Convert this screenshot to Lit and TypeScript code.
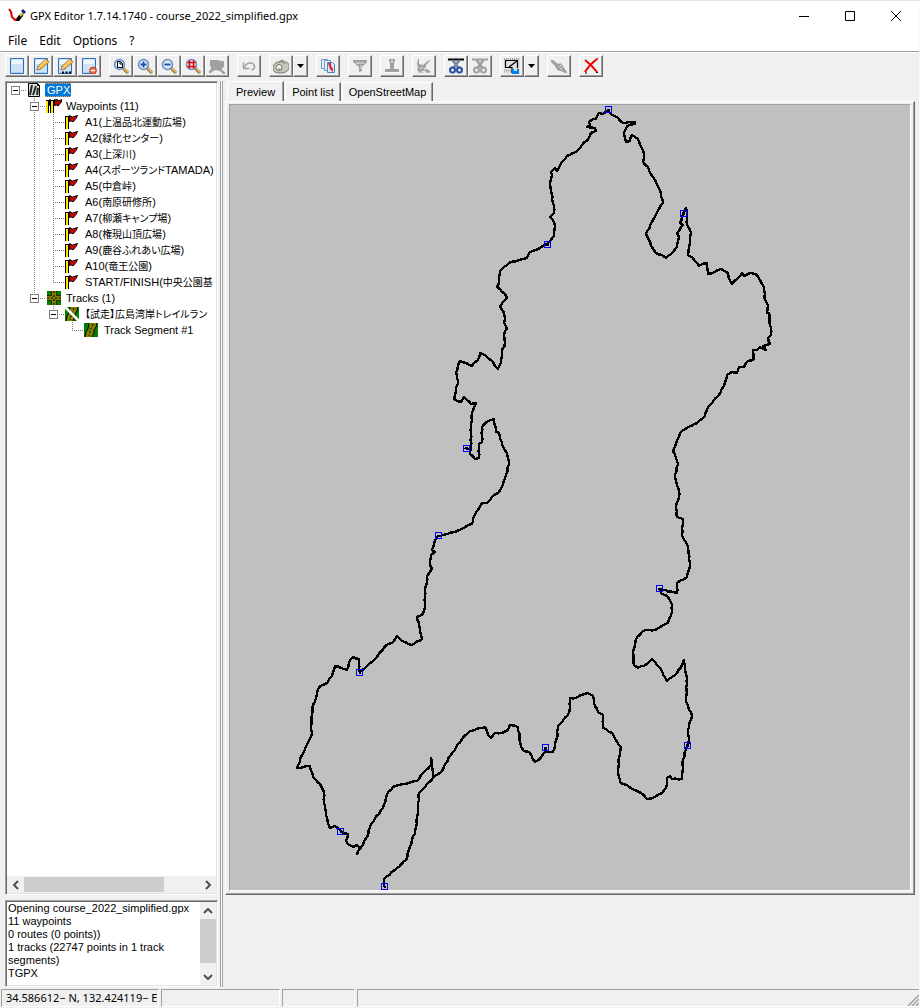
import { LitElement, html, svg, css } from "lit";
import { customElement, property, state } from "lit/decorators.js";
import { classMap } from "lit/directives/class-map.js";

const lens = (inner: unknown) => svg`
  <path d="M10 10l5 5" stroke="#8a6a3c" stroke-width="3"/>
  <path d="M10.500 10l4.500 4.500" stroke="#f0b95c" stroke-width="1.500"/>
  <circle cx="6.500" cy="6.500" r="5" fill="#d8e8fa" stroke="#6f8fc4" stroke-width="1.500"/>
  ${inner}`;

const sheet = svg`
  <path d="M1.500 .5h13v15h-13z" fill="#cfe3f8" stroke="#2f6fb8"/>
  <path d="M3 2h10v4H3z" fill="#eef6fe"/>
  <path d="M3 14.500h10" stroke="#a9cdf0"/>`;

const pencil = svg`
  <path d="M4 12l1-4 8-7 3 3-8 7z" fill="#f5b94a" stroke="#a8722a" stroke-width=".8"/>
  <path d="M4 12l1-4 2.500 2.800z" fill="#f7dfb4" stroke="#806040" stroke-width=".6"/>
  <path d="M6 9.500l7.500-7" stroke="#fde3a0"/>`;

const flag = (c: string, x = 0) => svg`
  <g transform="translate(${x} 0)">
    <path d="M0 2h4v13H0z" fill="#000"/>
    <path d="M1 3h2v12H1z" fill="#ffe800"/>
    <path d="M4.500 1.500l3 1.500 5-1.500-1.500 3-3 3.500-1.500-1-2 .5z" fill="${c}" stroke="#000"/>
  </g>`;

const road = svg`
  <path d="M0 0h14v14H0z" fill="#008000"/>
  <path d="M5 0h8l-1 4-2 3v3l-2 4H1l1-5 2-3z" fill="#808000"/>
  <path d="M5 0L4 6l-2 3-1 5M13 0l-1 4-2 3v3l-2 4" stroke="#000" fill="none"/>
  <path d="M9 1L8 4 6 7v3l-1 3" stroke="#000" fill="none" stroke-dasharray="2 2"/>`;

const scissors = (dark: string, blade: string, ring: string) => svg`
  <path d="M0 1.500h16" stroke="${dark}" stroke-width="2"/>
  <path d="M4.500 2l6 8M11.500 2l-6 8" stroke="${blade}" stroke-width="2.600"/>
  <circle cx="4.500" cy="12" r="2.500" fill="none" stroke="${ring}" stroke-width="2"/>
  <circle cx="11.500" cy="12" r="2.500" fill="none" stroke="${ring}" stroke-width="2"/>`;

const icons: Record<string, unknown> = {
  sheet,
  edit: svg`${sheet}${pencil}`,
  editDots: svg`${sheet}${pencil}<path d="M5 14.500h2m1.500 0h2m1.500 0h2" stroke="#000" stroke-width="2"/>`,
  remove: svg`${sheet}<circle cx="12" cy="12.500" r="3.500" fill="#e8663a" stroke="#b8431f" stroke-width=".8"/><path d="M10 12.500h4" stroke="#fff" stroke-width="1.500"/>`,
  zoomPage: lens(svg`<path d="M4.500 3.500h3l2 2v4h-5zM7 4v2h2" fill="#fff" stroke="#000"/>`),
  zoomIn: lens(svg`<path d="M3.500 6.500h6M6.500 3.500v6" stroke="#1c4fa0" stroke-width="1.800"/>`),
  zoomOut: lens(svg`<path d="M3.500 6.500h6" stroke="#1c4fa0" stroke-width="1.800"/>`),
  zoomSel: lens(svg`<path d="M4.500 2.500v8M8.500 2.500v8M2.500 4.500h8M2.500 8.500h8" stroke="#f00000" stroke-width="1.500"/>`),
  pan: svg`<path d="M1 2h9l1 1h4v6l-2 1v2l3 2v2h-2l-3-3-4-1-3 1-2 2H0v-2l2-2V9L1 8z" fill="#a0a0a0"/>`,
  undo: svg`<path d="M3.500 9.500C5 4 13.500 3.500 13.500 8.500c0 2-1 3-3 3.500" fill="none" stroke="#a0a0a0" stroke-width="1.500"/><path d="M2.500 4.500v6h6" fill="none" stroke="#a0a0a0" stroke-width="1.500"/>`,
  mouse: svg`<path d="M0 10c0-4 3-6 6-6l3-2 3 2c3 0 5 3 4 6-1 4-5 5-9 5-4 0-7-1-7-5z" fill="#c6c6b8" stroke="#77776c"/><circle cx="6" cy="9.500" r="3" fill="#eee" stroke="#77776c"/><path d="M6 4c2-1 4 0 6 2M9 10c-1 3-4 2-3 0" stroke="#77776c" fill="none"/>`,
  copy: svg`<path d="M1.500 1.500h6v9h-6z" fill="#e4f2fd" stroke="#6d9ac4"/><path d="M4.500 2.500h6v10h-6z" fill="#e4f2fd" stroke="#6d9ac4"/><path d="M7.500 4.500h5l2 2v8h-7z" fill="#d4e8fa" stroke="#4e86bc"/><path d="M8 5h3v3l2 3v3l-3-3z" fill="#e02020"/>`,
  filter: svg`<path d="M1 2h14v2l-5 5v4l-3 1V9L1 4z" fill="#a0a0a0"/><path d="M4 5h8M9 7v4" stroke="#e8e8e8"/>`,
  simplify: svg`<path d="M5 1h6v2l-1 2v6h5v3H1v-3h5V5L5 3z" fill="#a0a0a0"/><path d="M8 2v3M2 14.500h13" stroke="#f8f8f8"/>`,
  smooth: svg`<path d="M2 1h1v5l4 1 5-4 3-1-5 5v2l-3 3 4-1 4 3-3 1-3-1-5 1-3-3 1-3-1-3z" fill="#a0a0a0"/><path d="M4 11l3-2M5 14l5-1" stroke="#e8e8e8"/>`,
  cut: scissors("#000", "#7b8899", "#2450a8"),
  cutOff: scissors("#a0a0a0", "#a0a0a0", "#a0a0a0"),
  rect: svg`<path d="M0 0h16v16H0z" fill="#e0e0e0"/><path d="M0 1h16M0 12.500h8" stroke="#a8a8a8" stroke-width="2" stroke-dasharray="1 1"/><path d="M1.500 10V2.500h12V10M1 9.500h7V15M5 9l8-6" fill="none" stroke="#000" stroke-width="1.200"/><path d="M8 11h7v5H8z" fill="#0080f0"/><path d="M10 11h3v2h-3z" fill="#cde"/>`,
  join: svg`<path d="M0 2h2l5 4c3-1 5 1 6 4l3 4v1h-2l-4-2c-3 0-5-2-6-5L0 4z" fill="#a0a0a0"/><path d="M6 8l4-2M9 12l4-2" stroke="#a0a0a0" stroke-width="2"/><path d="M7 8l4 4M9 7l3 3" stroke="#e8e8e8" stroke-dasharray="2 1"/>`,
  del: svg`<path d="M2 2c4 3 8 7 12 12M14 1C9 5 5 9 2 14" stroke="#f00000" stroke-width="2" fill="none"/><path d="M13 14.500h2M2 15h2M14 1l1-1" stroke="#400"/>`,
  gpx: svg`<path d="M1.500 1.500h9l2 2v11h-11z" fill="#e0e0e0" stroke="#000"/><path d="M10.500 1.500v2h2" stroke="#000"/><path d="M3 13L5 3M6 13l3-9M10 13l1-7" stroke="#1d2b1d" stroke-width="2"/>`,
  waypoints: svg`${flag("#1818c0", -1)}${flag("#c00000", 4)}`,
  waypoint: flag("#d00000"),
  tracks: svg`<path d="M1 1h14v14H1z" fill="#008000"/><path d="M5.500 1h5v14h-5zM1 5.500h14v5H1z" fill="#808000"/><path d="M5.500 1v4.500H1M10.500 1v4.500H15M5.500 15v-4.500H1M10.500 15v-4.500H15" fill="none" stroke="#302800"/><path d="M8 1v14M1 8h14" stroke="#000" stroke-dasharray="2 2"/>`,
  track: svg`<g transform="translate(0 1)">${road}<path d="M0 0l14 14" stroke="#fff" stroke-width="2.500"/></g>`,
  segment: svg`<g transform="translate(0 1)">${road}</g>`,
};

const icon = (name: string) =>
  html`<svg class="icon" width="16" height="16" viewBox="0 0 16 16" fill="none" aria-hidden="true">${icons[name]}</svg>`;

interface Tool { icon: string; label: string; off?: boolean; menu?: boolean }

const toolGroups: Tool[][] = [
  [
    { icon: "sheet", label: "New" },
    { icon: "edit", label: "Open" },
    { icon: "editDots", label: "Save as" },
    { icon: "remove", label: "Close file" },
  ],
  [
    { icon: "zoomPage", label: "Zoom to fit" },
    { icon: "zoomIn", label: "Zoom in" },
    { icon: "zoomOut", label: "Zoom out" },
    { icon: "zoomSel", label: "Zoom selection" },
    { icon: "pan", label: "Pan", off: true },
  ],
  [{ icon: "undo", label: "Undo", off: true }],
  [{ icon: "mouse", label: "Mouse mode", menu: true }],
  [{ icon: "copy", label: "Copy" }],
  [{ icon: "filter", label: "Filter", off: true }],
  [{ icon: "simplify", label: "Simplify", off: true }],
  [{ icon: "smooth", label: "Smooth", off: true }],
  [
    { icon: "cut", label: "Split track" },
    { icon: "cutOff", label: "Split segment", off: true },
  ],
  [{ icon: "rect", label: "Select area", menu: true }],
  [{ icon: "join", label: "Join", off: true }],
  [{ icon: "del", label: "Delete" }],
];

/* Guides describe one 19px column each: v = line through, t = branch, l = last branch,
   s = stub only, blank = empty. A trailing "-" puts an expander on the branch. */
interface Row { guides: string[]; icon: string; text: string; selected?: boolean }

const places = [
  "A1(上温品北運動広場)",
  "A2(緑化センター)",
  "A3(上深川)",
  "A4(スポーツランドTAMADA)",
  "A5(中倉峠)",
  "A6(南原研修所)",
  "A7(柳瀬キャンプ場)",
  "A8(権現山頂広場)",
  "A9(鹿谷ふれあい広場)",
  "A10(竜王公園)",
  "START/FINISH(中央公園基",
];

const rows: Row[] = [
  { guides: ["s-"], icon: "gpx", text: "GPX", selected: true },
  { guides: ["", "t-"], icon: "waypoints", text: "Waypoints (11)" },
  ...places.map((text, i) => ({
    guides: ["", "v", i === places.length - 1 ? "l" : "t"],
    icon: "waypoint",
    text,
  })),
  { guides: ["", "l-"], icon: "tracks", text: "Tracks (1)" },
  { guides: ["", "", "l-"], icon: "track", text: "【試走】広島湾岸トレイルラン" },
  { guides: ["", "", "", "l"], icon: "segment", text: "Track Segment #1" },
];

const course =
  "466,448 471,450 471,427 472,413 474,408 476,403 471,404 464,397 461,402 454,399 456,391 456,387 458,384 457,375 456,373 458,365 460,361 472,366 474,363 478,360 480,353 486,356 493,362 495,366 498,369 501,363 502,352 505,343 504,335 507,328 504,323 505,319 504,313 500,307 503,302 507,298 505,294 497,287 499,283 500,271 504,267 509,263 519,260 527,258 530,252 540,248 547,244 " +
  "554,236 555,225 553,220 550,217 554,213 554,206 553,203 551,190 550,185 552,175 551,172 555,168 557,171 560,165 567,156 576,152 582,145 589,138 591,133 596,131 595,128 587,127 590,125 589,122 593,119 596,119 599,113 603,114 608,110 " +
  "612,115 618,118 623,123 635,122 635,124 627,126 624,132 626,142 630,141 632,135 638,139 640,144 643,150 644,154 643,162 648,167 650,173 653,177 657,185 660,190 663,203 657,212 652,222 646,234 649,240 651,246 656,253 662,255 666,258 673,252 677,247 679,237 677,233 683,225 680,223 682,217 683,214 686,208 687,215 687,225 691,233 689,247 688,255 693,258 699,266 702,264 707,263 708,274 713,273 721,269 728,273 730,281 732,284 737,279 742,273 744,276 750,273 757,275 761,282 764,287 765,300 768,305 767,313 " +
  "769,313 770,325 771,328 771,335 768,338 770,344 763,346 766,350 760,347 757,350 753,350 754,359 748,361 744,367 739,367 737,373 732,372 727,375 724,386 718,396 708,407 705,416 697,423 688,427 680,433 676,444 673,451 676,458 678,464 675,475 677,485 679,490 679,498 676,505 677,517 683,519 682,535 688,547 690,565 687,577 677,583 677,593 659,589 " +
  "662,594 667,596 672,604 672,612 669,619 668,623 662,626 655,630 645,630 637,637 635,645 633,652 634,665 638,668 647,664 652,659 660,668 667,681 677,673 682,665 684,660 685,670 687,678 686,702 692,715 688,730 689,740 687,746 683,760 682,779 672,779 670,776 667,778 666,788 662,793 655,797 647,799 641,793 635,790 620,782 618,773 619,758 621,747 615,739 612,733 603,728 603,715 598,712 594,703 593,696 588,693 581,695 576,698 570,698 570,707 568,715 558,726 557,738 553,752 547,752 545,748 545,752 540,759 535,762 529,752 524,751 521,747 518,727 510,725 508,730 502,733 495,733 491,738 488,735 485,727 470,731 462,739 450,756 441,772 433,778 419,793 418,810 416,827 415,834 413,836 409,850 406,860 397,868 384,879 384,886";

const returnLeg =
  "433,778 432,767 431,758 431,765 423,773 417,781 403,784 393,787 387,794 383,808 371,824 367,837 357,854 360,848 357,845 353,847 348,844 346,841 348,834 343,833 339,829 335,826 330,828 328,823 326,812 324,803 324,792 320,784 313,777 310,766 297,768 302,755 308,743 312,733 311,726 313,705 316,698 319,687 328,682 333,673 335,666 341,668 347,670 349,662 353,657 359,659 359,670 360,672 367,666 377,657 385,646 392,643 397,636 402,641 411,645 422,639 420,629 417,617 422,615 425,607 425,590 427,583 427,576 432,569 430,565 431,555 435,552 432,550 434,543 438,536 447,534 455,532 465,527 472,524 473,518 478,510 482,503 487,503 492,497 498,493 503,485 506,475 509,464 507,453 502,445 500,436 498,432 496,432 494,419 488,421 482,427 482,442 479,444 479,458 475,459 470,454 470,448";

/* Recorded trails wobble between their turning points: each long leg is split
   into short steps that sit a little to either side of it. */
const wobble = (points: string) => {
  const pts = points.split(" ").map((p) => p.split(",").map(Number));
  const sway = [0, 1, -1, 1, 0, -1];
  let n = 0;
  const out: string[] = [];
  pts.forEach(([x, y], i) => {
    if (i) {
      const [px, py] = pts[i - 1];
      const len = Math.hypot(x - px, y - py);
      const steps = Math.floor(len / 3);
      for (let s = 1; s < steps; s++) {
        const o = sway[n++ % sway.length] * 0.4;
        const t = s / steps;
        out.push(`${(px + (x - px) * t - ((y - py) / len) * o).toFixed(1)},${(py + (y - py) * t + ((x - px) / len) * o).toFixed(1)}`);
      }
    }
    out.push(`${x},${y}`);
  });
  return out.join(" ");
};

const markers = [
  [608, 109], [547, 244], [683, 213], [659, 588], [687, 745], [545, 747],
  [340, 831], [359, 672], [438, 535], [466, 448], [384, 886],
];

const chevron = (d: string) =>
  html`<svg width="10" height="10" viewBox="0 0 10 10" fill="none" aria-hidden="true"><path d="${d}" stroke="#505050" stroke-width="2"/></svg>`;

@customElement("gpx-toolbar")
class GpxToolbar extends LitElement {
  static styles = css`
    :host { display: flex; flex-wrap: wrap; gap: 8px; padding: 2px 5px 3px; }
    .group { display: flex; }
    button {
      box-sizing: border-box; width: 24px; height: 22px; padding: 0 1px 1px 0;
      display: grid; place-items: center; background: #f0f0f0;
      border: 1px solid; border-color: #fff #696969 #696969 #fff;
      box-shadow: inset -1px -1px #a0a0a0;
    }
    .arrow { width: 15px; }
    .icon { display: block; }
  `;
  render() {
    return toolGroups.map((g) => html`<div class="group">${g.map((t) => html`
      <button type="button" aria-label=${t.label} ?disabled=${t.off}>${icon(t.icon)}</button>
      ${t.menu ? html`<button type="button" class="arrow" aria-label="${t.label} options">
        <svg width="7" height="4" viewBox="0 0 7 4" aria-hidden="true"><path d="M0 0h7L3.500 4z" fill="#000"/></svg>
      </button>` : null}`)}</div>`);
  }
}

@customElement("gpx-tree")
class GpxTree extends LitElement {
  static styles = css`
    :host { display: block; overflow: hidden; background: #fff; }
    ul { list-style: none; margin: -1px 0 0; padding: 0; }
    li { display: flex; align-items: center; height: 16px; white-space: nowrap; }
    .guide { flex: none; width: 19px; height: 16px; }
    .icon { flex: none; margin: 0 2px 0 1px; }
    .label { font-size: 11px; line-height: 12px; padding: 0 1px 0 2px; border: 1px dotted transparent; border-width: 1px 0; }
    .cjk { font-size: 10px; font-feature-settings: "palt"; }
    .selected { background: #0078d7; color: #fff; border-color: #f0a050; }
  `;
  private guide(code: string) {
    const kind = code[0];
    const box = code.endsWith("-");
    return html`<svg class="guide" viewBox="0 0 19 16" fill="none" shape-rendering="crispEdges" aria-hidden="true">
      ${kind === "v" || kind === "t" ? svg`<path d="M8.500 0v16" stroke="#808080" stroke-dasharray="1 1"/>` : null}
      ${kind === "l" ? svg`<path d="M8.500 0v8" stroke="#808080" stroke-dasharray="1 1"/>` : null}
      ${kind && kind !== "v" ? svg`<path d="M8 8.500h11" stroke="#808080" stroke-dasharray="1 1"/>` : null}
      ${box ? svg`<path d="M4.500 4.500h8v8h-8z" fill="#fff" stroke="#808080"/><path d="M6 8.500h5" stroke="#000"/>` : null}
    </svg>`;
  }
  private label(text: string) {
    return text.split(/([\u3000-\u9fff]+)/).map((part, i) => (i % 2 ? html`<span class="cjk">${part}</span>` : part));
  }
  render() {
    return html`<ul role="tree" aria-label="Document">
      ${rows.map((r) => html`<li role="treeitem" aria-selected=${r.selected ? "true" : "false"}>
        ${r.guides.map((g) => this.guide(g))}${icon(r.icon)}<span
          class=${classMap({ label: true, selected: !!r.selected })}>${this.label(r.text)}</span></li>`)}
    </ul>`;
  }
}

@customElement("gpx-map")
class GpxMap extends LitElement {
  static styles = css`
    :host { display: block; background: #c0c0c0; overflow: hidden; min-height: 0; }
    svg { display: block; width: 100%; height: 100%; }
    .line { stroke: #000; stroke-width: 2.4; stroke-linejoin: round; stroke-linecap: square; fill: none; }
    .mark { stroke: #0000ff; fill: none; }
    .dot { fill: #000; }
  `;
  render() {
    return html`<svg viewBox="230 105 680 785" shape-rendering="crispEdges" role="img" aria-label="Track preview">
      <polyline class="line" points=${wobble(course)}></polyline>
      <polyline class="line" points=${wobble(returnLeg)}></polyline>
      ${markers.map(([x, y]) => svg`<rect class="dot" x=${x} y=${y} width="2" height="2"/><rect class="mark" x=${x - 2.5} y=${y - 2.5} width="6" height="6"/>`)}
    </svg>`;
  }
}

@customElement("app-root")
class AppRoot extends LitElement {
  @property() file = "course_2022_simplified.gpx";
  @state() private tab = 0;

  static styles = css`
    :host {
      display: flex; flex-direction: column; box-sizing: border-box; height: 100vh; overflow: hidden;
      background: #f0f0f0; color: #000; border-right: 1px solid #fafafa; border-top: 1px solid #e4e4e4;
      font-family: "Liberation Sans", "Noto Sans CJK JP", sans-serif; font-size: 11px;
    }
    button { font: inherit; color: inherit; }
    .titlebar { display: flex; align-items: center; height: 30px; background: #fff; padding-left: 8px; font-family: "Noto Sans", sans-serif; }
    .logo { flex: none; margin-right: 4px; }
    .title { flex: 1; margin: 0; font-size: 11px; font-weight: 400; line-height: 16px; white-space: nowrap; }
    .window { width: 46px; height: 30px; padding: 0; border: 0; background: none; display: grid; place-items: center; }
    .menu { display: flex; height: 20px; background: #fff; padding-left: 2px; font-family: "Noto Sans", sans-serif; font-size: 12px; border-bottom: 1px solid #a0a0a0; box-shadow: 0 1px #fff; margin-bottom: 1px; }
    .menu button { border: 0; background: none; padding: 0 6px; line-height: 18px; }
    .main { flex: 1; min-height: 0; display: grid; grid-template-columns: 218px 7px 1fr; padding: 1px 4px 2px 0; }
    .side { display: flex; flex-direction: column; gap: 5px; padding-left: 5px; min-height: 0; }
    .sunken { border: 1px solid; border-color: #a0a0a0 #fff #fff #a0a0a0; box-shadow: inset 1px 1px #696969, inset -1px -1px #e3e3e3; padding: 1px; background: #fff; }
    .treebox { flex: 1; min-height: 0; display: flex; flex-direction: column; }
    gpx-tree { flex: 1; }
    .hbar { display: flex; align-items: center; height: 17px; background: #f0f0f0; }
    .vbar { display: flex; flex-direction: column; align-items: center; width: 16px; background: #f0f0f0; }
    .scroll { flex: none; width: 17px; height: 17px; padding: 0; border: 0; background: none; display: grid; place-items: center; }
    .track { flex: 1; align-self: stretch; display: flex; }
    .hthumb { width: 80%; height: 15px; align-self: center; background: #cdcdcd; }
    .vthumb { width: 16px; height: 90%; background: #cdcdcd; }
    .logbox { display: flex; height: 83px; }
    .log { flex: 1; min-width: 0; border: 0; padding: 0 1px; margin: 0; resize: none; outline: 0; background: #fff; color: #000; font: 11px/13px "Liberation Sans", sans-serif; scrollbar-width: none; overflow: hidden; }
    .split { border-left: 1px solid #a0a0a0; border-right: 1px solid #a0a0a0; margin: 0 2px; background: #fff; }
    .work { display: flex; flex-direction: column; min-width: 0; min-height: 0; padding-bottom: 92px; }
    .tabs { display: flex; padding-left: 2px; height: 20px; gap: 1px; }
    .tab { height: 19px; margin-top: 1px; padding: 0 6px; border: 1px solid; border-color: #fff #696969 transparent #fff; border-bottom: 0; box-shadow: inset -1px 0 #a0a0a0; background: #f0f0f0; line-height: 18px; }
    .active { margin-top: 0; height: 21px; padding: 0 8px; line-height: 16px; }
    .sheet { flex: 1; min-height: 0; display: flex; border: 1px solid; border-color: #fff #696969 #696969 #fff; box-shadow: inset -1px -1px #a0a0a0; padding: 2px 3px 3px 3px; }
    .canvas { flex: 1; min-width: 0; display: flex; border: 1px solid; border-color: #a0a0a0 #fff #fff #a0a0a0; }
    gpx-map { flex: 1; min-width: 0; }
    .status { display: grid; grid-template-columns: 158px 119px 73px 1fr; gap: 2px; height: 18px; padding: 0 0 1px 1px; font-family: "Noto Sans", sans-serif; line-height: 15px; }
    .cell { border: 1px solid; border-color: #a0a0a0 #fff #fff #a0a0a0; padding-left: 4px; white-space: nowrap; overflow: hidden; }
    .last { display: flex; justify-content: flex-end; align-items: flex-end; border-right: 0; }
  `;

  render() {
    const tabs = ["Preview", "Point list", "OpenStreetMap"];
    const log = `Opening ${this.file}\n11 waypoints\n0 routes (0 points))\n1 tracks (22747 points in 1 track segments)\nTGPX`;
    return html`
      <header class="titlebar">
        <svg class="logo" width="18" height="16" viewBox="0 0 18 16" fill="none" aria-hidden="true">
          <path d="M1 1l2 3 1 5 3 3 3-2" stroke="#e00000" stroke-width="2"/>
          <path d="M8 13l2-5 6-5-1 5-4 5z" fill="#000"/><path d="M12 8l4-4" stroke="#f0d020" stroke-width="2"/><path d="M14 2l3 3" stroke="#1020a0" stroke-width="3"/>
        </svg>
        <h1 class="title">GPX Editor 1.7.14.1740 - ${this.file}</h1>
        <button class="window" aria-label="Minimize"><svg width="10" height="10"><path d="M0 5.500h10" stroke="#000"/></svg></button>
        <button class="window" aria-label="Maximize"><svg width="10" height="10"><path d="M.5 .5h9v9h-9z" fill="none" stroke="#000"/></svg></button>
        <button class="window" aria-label="Close"><svg width="10" height="10"><path d="M0 0l10 10M10 0L0 10" stroke="#000"/></svg></button>
      </header>
      <nav class="menu" aria-label="Main menu">
        ${["File", "Edit", "Options", "?"].map((m) => html`<button type="button">${m}</button>`)}
      </nav>
      <gpx-toolbar></gpx-toolbar>
      <main class="main">
        <section class="side">
          <div class="sunken treebox">
            <gpx-tree></gpx-tree>
            <div class="hbar">
              <button class="scroll" aria-label="Scroll left">${chevron("M7 1L3 5l4 4")}</button>
              <div class="track"><div class="hthumb"></div></div>
              <button class="scroll" aria-label="Scroll right">${chevron("M3 1l4 4-4 4")}</button>
            </div>
          </div>
          <div class="sunken logbox">
            <textarea class="log" aria-label="Log" readonly .value=${log}></textarea>
            <div class="vbar">
              <button class="scroll" aria-label="Scroll up">${chevron("M1 7l4-4 4 4")}</button>
              <div class="track"><div class="vthumb"></div></div>
              <button class="scroll" aria-label="Scroll down">${chevron("M1 3l4 4 4-4")}</button>
            </div>
          </div>
        </section>
        <div class="split"></div>
        <section class="work">
          <div class="tabs" role="tablist">
            ${tabs.map((t, i) => html`<button type="button" role="tab" aria-selected=${i === this.tab ? "true" : "false"}
              class=${classMap({ tab: true, active: i === this.tab })} @click=${() => (this.tab = i)}>${t}</button>`)}
          </div>
          <div class="sheet"><div class="canvas"><gpx-map></gpx-map></div></div>
        </section>
      </main>
      <footer class="status">
        <div class="cell">34.586612− N, 132.424119− E</div>
        <div class="cell"></div>
        <div class="cell"></div>
        <div class="cell last"><svg width="12" height="12" viewBox="0 0 12 12" aria-hidden="true"><path d="M1 12L12 1M5 12l7-7M9 12l3-3" stroke="#a0a0a0" stroke-width="1.500"/></svg></div>
      </footer>`;
  }
}
